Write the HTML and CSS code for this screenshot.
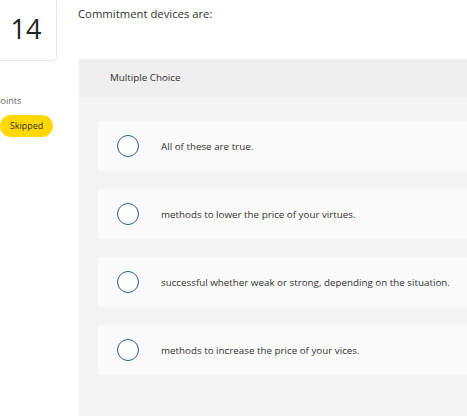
FILE: index.html
```html
<!DOCTYPE html>
<html lang="en">
<head>
    <meta charset="UTF-8">
    <meta name="viewport" content="width=device-width, initial-scale=1.0">
    <title>Question 14</title>
    <link rel="stylesheet" href="styles.css">
</head>
<body>
    <div class="page">
        <aside class="side">
            <div class="num-box">14</div>
            <div class="points">points</div>
            <span class="badge">Skipped</span>
        </aside>
        <main class="main">
            <p class="question">Commitment devices are:</p>
            <section class="panel">
                <div class="panel-head">Multiple Choice</div>
                <div class="panel-body">
                    <label class="option"><span class="radio"></span>All of these are true.</label>
                    <label class="option"><span class="radio"></span>methods to lower the price of your virtues.</label>
                    <label class="option"><span class="radio"></span>successful whether weak or strong, depending on the situation.</label>
                    <label class="option"><span class="radio"></span>methods to increase the price of your vices.</label>
                </div>
            </section>
        </main>
    </div>
</body>
</html>
```

FILE: styles.css
```css
body {
    margin: 0;
    padding: 0;
    font-family: 'Open Sans', Arial, sans-serif;
    color: #333;
    background: #fff;
    overflow: hidden;
}
.page {
    display: flex;
    align-items: flex-start;
}
.side {
    flex-shrink: 0;
    width: 67px;
    margin-left: -10px;
}
.num-box {
    height: 71px;
    margin-top: -10px;
    padding: 10px 0 0 5px;
    box-sizing: border-box;
    border: 1px solid #e9e9e9;
    border-radius: 4px;
    font-size: 27px;
    line-height: 56px;
    text-align: center;
    color: #222;
}
.points {
    margin-top: 34px;
    padding-left: 5px;
    font-size: 9px;
    line-height: 12px;
    color: #666;
}
.badge {
    display: block;
    width: 53px;
    height: 22px;
    margin: 8px 0 0 10px;
    border-radius: 11px;
    background-color: #ffd800;
    font-size: 9px;
    line-height: 22px;
    text-align: center;
    color: #333;
}
.main {
    flex-shrink: 0;
    width: 430px;
    margin-left: 21px;
}
.question {
    margin: 0;
    padding-top: 6px;
    font-size: 11.3px;
    line-height: 16px;
    color: #333;
}
.panel {
    margin: 37px 0 0 1px;
}
.panel-head {
    height: 38px;
    padding-left: 31px;
    background-color: #efefef;
    font-size: 9.8px;
    line-height: 38px;
    color: #333;
}
.panel-body {
    display: flex;
    flex-direction: column;
    gap: 18px;
    padding: 24px 0 41px 19px;
    background-color: #f4f4f4;
}
.option {
    display: flex;
    align-items: center;
    gap: 22px;
    height: 50px;
    padding-left: 19px;
    background-color: #fafafa;
    border-radius: 2px;
    font-size: 9.8px;
    color: #333;
    cursor: pointer;
}
.radio {
    width: 22px;
    height: 22px;
    box-sizing: border-box;
    border: 1.5px solid #2b5f8f;
    border-radius: 50%;
    background: #fff;
    flex-shrink: 0;
}
```
